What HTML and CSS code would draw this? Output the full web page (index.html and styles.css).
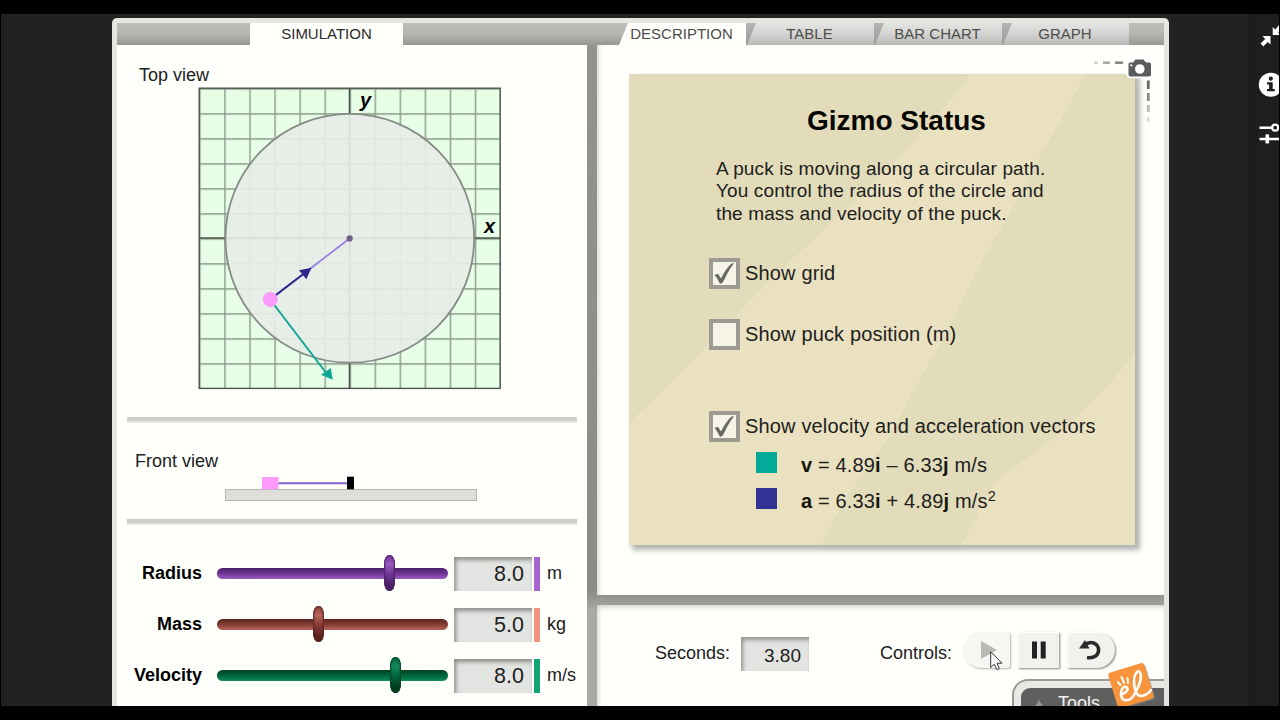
FILE: index.html
```html
<!DOCTYPE html>
<html lang="en">
<head>
<meta charset="utf-8">
<title>Uniform Circular Motion</title>
<link rel="stylesheet" href="styles.css">
</head>
<body>
<div class="stage">
  <main class="frame">
    <nav class="tabs">
      <div class="tab tab-sim">SIMULATION</div>
      <div class="tab tab-active">DESCRIPTION</div>
      <div class="tab-slot"><div class="tab">TABLE</div></div>
      <div class="tab-slot"><div class="tab">BAR CHART</div></div>
      <div class="tab-slot"><div class="tab">GRAPH</div></div>
    </nav>
    <div class="columns">
      <section class="sim">
        <h2 class="view-title">Top view</h2>
        <svg class="plot" width="304" height="304" viewBox="198 87 304 304">
          <defs>
            <pattern id="grid" x="199.2" y="88.2" width="25.05" height="25" patternUnits="userSpaceOnUse">
              <path d="M0 0H25.05M0 0V25" stroke="#8a988a" stroke-width="2.8" fill="none"/>
            </pattern>
          </defs>
          <rect x="199.2" y="88.2" width="301" height="300.2" fill="#e7ffe7"/>
          <rect x="199.2" y="88.2" width="301" height="300.2" fill="url(#grid)"/>
          <path d="M349.5 88V388M199 238H500" stroke="#4c554c" stroke-width="1.6"/>
          <rect x="199.2" y="88.2" width="301" height="300.2" fill="none" stroke="#4c524c" stroke-width="1.4"/>
          <circle cx="349.8" cy="238.3" r="124.4" fill="#e7ede7" fill-opacity=".92" stroke="#858b85" stroke-width="1.8"/>
          <path d="M270 299.5L349.6 238.5" stroke="#9b80e2" stroke-width="1.8"/>
          <circle cx="349.7" cy="238.4" r="3.1" fill="#6f6385"/>
          <path d="M272 298L306 272" stroke="#33268a" stroke-width="2"/>
          <path d="M311.5 267.8L299 270.3L306.3 279.3Z" fill="#33268a"/>
          <path d="M272 302L327 374" stroke="#12a794" stroke-width="2"/>
          <path d="M332.7 379.8L321 374.8L330.8 368Z" fill="#12a794"/>
          <circle cx="270.3" cy="299.5" r="7.4" fill="#fd9bfb"/>
          <text x="360" y="107" class="axis">y</text>
          <text x="484" y="233" class="axis">x</text>
        </svg>
        <div class="rule"></div>
        <h2 class="view-title front-title">Front view</h2>
        <svg class="front" width="253" height="27" viewBox="225 475 253 27">
          <rect x="225.5" y="489.5" width="251" height="11" fill="#dedfdb" stroke="#b5b6b2"/>
          <path d="M270 483.2H350" stroke="#8365d2" stroke-width="2"/>
          <rect x="262" y="477" width="16.5" height="12.3" fill="#fd9bfb"/>
          <rect x="347" y="476.7" width="7" height="12.6" fill="#000"/>
        </svg>
        <div class="rule"></div>
        <div class="sliders">
          <div class="slider radius">
            <label>Radius</label>
            <div class="track"><i class="thumb" style="left:167px"></i></div>
            <output>8.0</output><span class="swatch-bar"></span><span class="unit">m</span>
          </div>
          <div class="slider mass">
            <label>Mass</label>
            <div class="track"><i class="thumb" style="left:96px"></i></div>
            <output>5.0</output><span class="swatch-bar"></span><span class="unit">kg</span>
          </div>
          <div class="slider velocity">
            <label>Velocity</label>
            <div class="track"><i class="thumb" style="left:173px"></i></div>
            <output>8.0</output><span class="swatch-bar"></span><span class="unit">m/s</span>
          </div>
        </div>
      </section>
      <div class="right">
        <section class="description">
          <div class="card">
            <svg class="bands" width="506" height="471" viewBox="0 0 506 471">
              <path d="M342 0H457C420 65 400 105 380 140C360 175 345 200 325 243C310 275 292 300 275 336C250 385 220 410 192 471H0V349C45 305 80 270 112 236C150 196 175 175 205 146C260 95 300 55 342 0Z" fill="#eae1c1"/>
              <path d="M506 280C485 305 460 332 435 356C410 375 390 390 368 406C355 425 345 450 332 471H506Z" fill="#eae1c1"/>
            </svg>
            <div class="card-body">
              <h1>Gizmo Status</h1>
              <p>A puck is moving along a circular path.<br>You control the radius of the circle and<br>the mass and velocity of the puck.</p>
              <div class="check"><span class="box"><svg width="23" height="23" viewBox="0 0 23 23"><path d="M1.500 13L5 11.800L8 16.500C11 10.500 14.500 5 18.500 1.500L21 1.200C16 7.500 13 14 9.800 20.500L7 22C5.500 18.500 3.500 15 1.500 13Z" fill="#686864"/></svg></span>Show grid</div>
              <div class="check check-position"><span class="box"></span>Show puck position (m)</div>
              <div class="check check-vectors"><span class="box"><svg width="23" height="23" viewBox="0 0 23 23"><path d="M1.500 13L5 11.800L8 16.500C11 10.500 14.500 5 18.500 1.500L21 1.200C16 7.500 13 14 9.800 20.500L7 22C5.500 18.500 3.500 15 1.500 13Z" fill="#686864"/></svg></span>Show velocity and acceleration vectors</div>
              <div class="vector"><span class="key key-v"></span><span><b>v</b> = 4.89<b>i</b> – 6.33<b>j</b> m/s</span></div>
              <div class="vector"><span class="key key-a"></span><span><b>a</b> = 6.33<b>i</b> + 4.89<b>j</b> m/s<sup>2</sup></span></div>
            </div>
          </div>
          <svg class="camera" width="65" height="68" viewBox="1090 57 65 68">
            <path d="M1094 62.7H1098" stroke="#d8d8d5" stroke-width="2.6"/>
            <path d="M1103 62.7H1110" stroke="#aaa" stroke-width="2.6"/>
            <path d="M1115 62.7H1123" stroke="#888" stroke-width="2.6"/>
            <path d="M1148.3 80.5V89" stroke="#686868" stroke-width="2.8"/>
            <path d="M1148.3 93V101" stroke="#8b8b8b" stroke-width="2.8"/>
            <path d="M1148.3 105V112" stroke="#bbb" stroke-width="2.8"/>
            <path d="M1148.3 117V122" stroke="#ddd" stroke-width="2.8"/>
            <path d="M1130 62.5H1133L1135.5 59.5H1143.5L1146 62.5H1149Q1151 62.5 1151 64.5V74.5Q1151 76.5 1149 76.5H1130.5Q1128.5 76.5 1128.5 74.5V64.5Q1128.5 62.5 1130 62.5Z" fill="#5c5c5c" stroke="#fff" stroke-width="3.5" paint-order="stroke"/>
            <circle cx="1139.8" cy="69" r="4.8" fill="#fff"/>
            <circle cx="1131.3" cy="65.3" r="1.1" fill="#fff"/>
          </svg>
        </section>
        <section class="playback">
          <span class="label-seconds">Seconds:</span>
          <output class="time">3.80</output>
          <span class="label-controls">Controls:</span>
          <div class="buttons">
            <button class="btn play" aria-label="Play"><svg width="18" height="18" viewBox="0 0 18 18"><path d="M1 0L17 9L1 18Z" fill="#b9bab6"/></svg></button>
            <button class="btn pause" aria-label="Pause"><svg width="14" height="18" viewBox="0 0 14 18"><path d="M0 .5H5V17.5H0ZM8.700 .5H13.700V17.500H8.700Z" fill="#222"/></svg></button>
            <button class="btn reset" aria-label="Reset"><svg width="22" height="20" viewBox="0 0 22 20"><path d="M5 5.500C8 3 12 2 14.500 3C18.500 4.500 20.300 8 19.300 12C18 16.800 13 18.300 8 17.500" fill="none" stroke="#2b2b2b" stroke-width="3.600"/><path d="M0 8.500L6 0L10.500 8.500Z" fill="#2b2b2b"/></svg></button>
          </div>
          <svg class="cursor" width="14" height="20" viewBox="0 0 14 20"><path d="M.7 .8V16.500L4.300 13.200L6.800 18.700L9.300 17.600L7 12.200H12Z" fill="#fff" stroke="#333" stroke-width="1"/></svg>
          <div class="tools"><div class="tools-head"><span class="caret"></span>Tools</div></div>
          <svg class="logo" width="52" height="52" viewBox="0 0 52 52">
            <g transform="rotate(-17 26 26)">
              <rect x="8" y="9.500" width="37.500" height="37" rx="3" fill="#9b8c78" opacity=".65"/>
              <rect x="7" y="8" width="37.500" height="37" rx="3" fill="#f7943c"/>
            </g>
            <path d="M16 35C20 35 24 31 22 28.500C19.500 26 15.500 30 16 36C17 43 25 43 29 36C33 29 38 20 35 13.500C33 10 29 15 29 22C29 31 32 38 37 37C41 36 44 34 46 31" fill="none" stroke="#fff" stroke-width="2.500" stroke-linecap="round"/>
            <path d="M15.500 26L13 23M19 24L16.500 18M23 24L22.500 19" stroke="#fff" stroke-width="2" stroke-linecap="round"/>
          </svg>
        </section>
      </div>
    </div>
  </main>
  <aside class="sidebar">
    <svg width="29" height="130" viewBox="1250 20 29 130">
      <path d="M1262.500 36H1270.500V44.500L1267.800 42L1263.300 46.500L1260.500 43.500L1265.200 39ZM1279 25L1275.300 29.500L1272.700 27V35H1281L1278.300 32.500L1283 28Z" fill="#fff"/>
      <circle cx="1270.800" cy="84.800" r="12" fill="#fff"/>
      <circle cx="1270.800" cy="78.700" r="2.100" fill="#1e1e1e"/>
      <path d="M1267 82.200H1272.700V88.900H1274.800V91.200H1267V88.900H1269.100V84.500H1267Z" fill="#1e1e1e"/>
      <path d="M1259.500 127.700H1272M1259.500 139H1280M1267.300 134.800V143.200" stroke="#fff" stroke-width="2.400" fill="none"/>
      <path d="M1267.300 134.500V143.300" stroke="#fff" stroke-width="3.600"/>
      <circle cx="1275.200" cy="127.700" r="3" fill="none" stroke="#fff" stroke-width="2.200"/>
    </svg>
  </aside>
</div>
</body>
</html>
```
FILE: styles.css
```css
* { box-sizing: border-box; }
body {
  margin: 0;
  width: 1280px;
  height: 720px;
  padding: 14px 1px;
  overflow: hidden;
  background: #000;
  color: #20201c;
  font-family: "Liberation Sans", Arial, sans-serif;
}
h1, h2, p { margin: 0; font-weight: 400; }
svg { display: block; }

.stage { display: flex; height: 692px; overflow: hidden; background: #222; }
.frame {
  width: 1057px;
  height: 700px;
  margin: 4px 0 0 111px;
  padding: 5px 5px 0;
  background: #e5e5e2;
  border-radius: 5px 5px 0 0;
}
.sidebar { width: 30px; margin-left: auto; padding-top: 6px; background: #1e1e1e; border-left: 1px solid #161616; }

.tabs { display: flex; height: 22px; background: linear-gradient(#bebfbb, #b5b6b2 50%, #979894); }
.tab { height: 22px; padding-top: 1px; font-size: 15px; line-height: 20px; text-align: center; color: #4d4d4a; }
.tab-sim { width: 153px; margin-left: 133px; background: #fffffc; color: #2b2b28; }
.tab-active { width: 127px; margin-left: 216px; padding-right: 2px; background: #fffffc; clip-path: polygon(9px 0, 100% 0, 100% 100%, 0 100%); }
.tab-slot { width: 128px; padding-left: 1px; background: linear-gradient(#b5b6b3, #999a97); }
.tab-slot:last-child { width: 127px; }
.tab-slot .tab { padding-right: 2px; background: linear-gradient(#e4e4e2, #d5d5d3 45%, #babbb8); clip-path: polygon(9px 0, 100% 0, 100% 100%, 0 100%); }

.columns { display: flex; gap: 10px; height: 665px; background: linear-gradient(#92938f, #8b8c88 82%, #a8a9a5 85%); }
.sim { width: 470px; background: #fffffc; }
.view-title { padding: 20px 0 0 22px; font-size: 18px; line-height: 20px; }
.plot { margin: 2px 0 0 81px; }
.axis { font: italic bold 20px "Liberation Sans", Arial, sans-serif; fill: #000; }
.rule { width: 450px; height: 6px; margin: 26px 0 0 10px; background: linear-gradient(#c9cac5, #d2d3ce 60%, #f4f4f0); }
.front-title { padding: 28px 0 0 18px; }
.front { margin: 4px 0 0 108px; }
.front + .rule { margin-top: 17px; }
.sliders { display: grid; gap: 17px; padding-top: 32px; }
.slider { display: grid; grid-template-columns: 85px 231px 78px 6px 1fr; align-items: center; height: 34px; }
.slider label { margin-bottom: 2px; text-align: right; font-size: 18px; font-weight: 700; color: #000; }
.slider .track { position: relative; margin: 0 0 2px 15px; width: 231px; height: 11px; border-radius: 6px; background: linear-gradient(var(--dark), var(--main) 55%, var(--light)); }
.slider output { margin-left: 21px; width: 78px; height: 34px; padding-right: 8px; font-size: 21.500px; line-height: 35px; text-align: right; background: #e3e5e2; box-shadow: inset 2px 3px 4px #8d8e8a; }
.slider .swatch-bar { width: 6px; height: 34px; margin-left: 23px; background: var(--bar); }
.slider .unit { margin: 0 0 2px 30px; font-size: 18px; }
.thumb { position: absolute; top: -13px; width: 11px; height: 36px; border-radius: 5px / 9px; background: linear-gradient(var(--main), var(--light) 25%, var(--main) 50%, var(--dark) 85%); box-shadow: inset 1px 0 2px var(--dark), inset -1px 0 2px var(--dark); }
.radius { --dark: #4a1f66; --main: #74389a; --light: #9a5bc0; --bar: #a865cf; }
.mass { --dark: #58231d; --main: #8a3f37; --light: #b8665b; --bar: #f0937f; }
.velocity { --dark: #00401f; --main: #006840; --light: #148a5d; --bar: #12a474; }

.right { display: flex; flex-direction: column; gap: 10px; width: 567px; }
.description { position: relative; height: 550px; padding: 29px 0 0 32px; background: #fffffc; box-shadow: inset 4px 0 4px -2px #d9dad6; }
.card { position: relative; width: 506px; height: 471px; background: #e2dcba; box-shadow: 4px 4px 5px 1px #b2b4ae; }
.bands { position: absolute; inset: 0; }
.card-body { position: relative; padding: 30px 0 0 80px; }
.card h1 { padding-left: 98px; font-size: 28px; line-height: 34px; font-weight: 700; color: #060602; }
.card p { margin: 20px 0 0 7px; font-size: 19px; line-height: 22.300px; letter-spacing: .13px; }
.check { display: flex; align-items: center; gap: 5px; height: 31px; margin-top: 33px; font-size: 20px; letter-spacing: .16px; white-space: nowrap; }
.check-position { margin-top: 30px; }
.check-vectors { margin-top: 61px; }
.check .box { width: 31px; height: 31px; border: 4px solid #9d9a92; background: #f6f4e6; }
.vector { display: flex; align-items: center; height: 36px; padding-left: 47px; gap: 24px; font-size: 20px; letter-spacing: .15px; white-space: nowrap; }
.check-vectors + .vector { margin-top: 6px; }
.vector b { color: #15150a; }
.vector sup { font-size: 14.500px; line-height: 0; vertical-align: 7px; }
.key { width: 21px; height: 21px; margin-top: -6px; }
.key-v { background: #04aa98; }
.key-a { background: #313394; }
.camera { position: absolute; left: 493px; top: 12px; }

.playback { position: relative; flex: 1; display: flex; align-items: flex-start; padding: 27px 0 0 58px; background: #fffffc; box-shadow: inset 0 5px 7px -4px #c5c6c2, inset 4px 0 4px -2px #ddd; font-size: 18px; overflow: hidden; }
.label-seconds { width: 86px; padding-top: 10px; line-height: 22px; }
.time { width: 68px; height: 34px; margin-top: 5px; padding-right: 8px; font-size: 19px; line-height: 37px; text-align: right; background: #e4e5e2; box-shadow: inset 2px 3px 4px #92938f; }
.label-controls { width: 83px; margin-left: 71px; padding-top: 10px; line-height: 22px; }
.buttons { display: flex; gap: 8px; }
.btn { display: flex; align-items: center; justify-content: center; width: 48px; height: 36px; padding: 0; border: 0; background: #f1f1ee; box-shadow: 1px 1px 2px #868782, inset 1px 1px 1px #fff; }
.play { width: 47px; border-radius: 19px 2px 2px 19px; padding-left: 4px; background: #f6f6f3; box-shadow: 1px 1px 2px #b4b5b0; }
.pause { width: 41px; }
.reset { border-radius: 2px 19px 19px 2px; padding-right: 2px; }
.cursor { position: absolute; left: 393px; top: 46px; }
.tools { position: absolute; left: 415px; top: 74px; width: 160px; height: 60px; padding: 7px 0 0 7px; border: 2px solid #999a96; border-radius: 16px 0 0; background: #e8e8e5; }
.tools-head { display: flex; align-items: center; gap: 14px; height: 40px; padding: 0 0 9px 13px; border-radius: 9px 0 0; background: #5f5f5f; color: #f2f2f2; font-size: 18px; }
.caret { border: 5px solid transparent; border-top: 0; border-bottom: 8px solid #929292; }
.logo { position: absolute; left: 508px; top: 54px; }
```
